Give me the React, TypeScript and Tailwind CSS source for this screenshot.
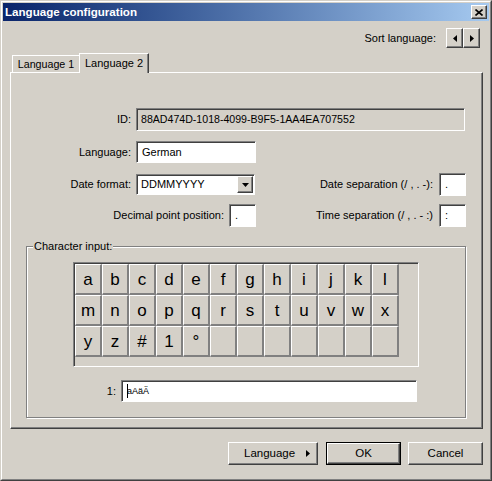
import React from "react";

const raised =
  "border border-t-white border-l-white border-r-[#404040] border-b-[#404040] shadow-[inset_-1px_-1px_0_#808080]";
const sunken =
  "border border-t-[#808080] border-l-[#808080] border-r-white border-b-white shadow-[inset_1px_1px_0_#404040]";

const rows: string[][] = [
  ["a", "b", "c", "d", "e", "f", "g", "h", "i", "j", "k", "l"],
  ["m", "n", "o", "p", "q", "r", "s", "t", "u", "v", "w", "x"],
  ["y", "z", "#", "1", "°", "", "", "", "", "", "", ""],
];

function TriLeft() {
  return (
    <svg width="4" height="7" viewBox="0 0 4 7">
      <path d="M4 0 L0 3.5 L4 7 Z" fill="#000" />
    </svg>
  );
}
function TriRight() {
  return (
    <svg width="4" height="7" viewBox="0 0 4 7">
      <path d="M0 0 L4 3.5 L0 7 Z" fill="#000" />
    </svg>
  );
}
function TriDown() {
  return (
    <svg width="7" height="4" viewBox="0 0 7 4">
      <path d="M0 0 L7 0 L3.5 4 Z" fill="#000" />
    </svg>
  );
}

export default function App() {
  return (
    <div className="w-[492px] h-[481px] bg-[#d4d0c8] border border-t-[#d4d0c8] border-l-[#d4d0c8] border-r-[#404040] border-b-[#404040] font-['Liberation_Sans',Arial,sans-serif] text-[11px] text-black leading-none select-none">
      <div className="h-full border border-t-white border-l-white border-r-[#808080] border-b-[#808080] p-px flex flex-col">
        {/* Title bar */}
        <div className="h-[18px] bg-linear-to-r from-[#0a246a] to-[#a6caf0] flex items-center justify-between pl-[2px] pr-[2px]">
          <span className="text-white font-bold text-[11.6px]">Language configuration</span>
          <div className={`w-[16px] h-[14px] bg-[#d4d0c8] flex items-center justify-center ${raised}`}>
            <svg width="8" height="7" viewBox="0 0 8 7">
              <path d="M0.5 0.5 L7.5 6.5 M7.5 0.5 L0.5 6.5" stroke="#000" strokeWidth="1.6" />
            </svg>
          </div>
        </div>

        {/* Sort language */}
        <div className="mt-[7px] h-[20px] flex items-center justify-end pr-[9px]">
          <span className="mr-[10px]">Sort language:</span>
          <div className={`w-[17px] h-[20px] flex items-center justify-center ${raised}`}>
            <TriLeft />
          </div>
          <div className={`w-[17px] h-[20px] flex items-center justify-center ${raised}`}>
            <TriRight />
          </div>
        </div>

        {/* Tabs */}
        <div className="mt-[5px] ml-[7px] h-[19px] flex items-end pl-[2px]">
          <div className="w-[67px] h-[17px] border-t border-l border-t-white border-l-white flex items-center justify-center pt-[1px] text-[10.7px]">
            Language 1
          </div>
          <div className="relative z-10 w-[70px] h-[20px] -mb-px bg-[#d4d0c8] border-t border-l border-r border-t-white border-l-white border-r-[#404040] shadow-[inset_-1px_0_0_#808080] flex items-start justify-center pt-[4px]">
            Language 2
          </div>
        </div>

        {/* Panel */}
        <div className="ml-[7px] w-[473px] h-[357px] border border-t-white border-l-white border-r-[#404040] border-b-[#404040] shadow-[inset_-1px_-1px_0_#808080] flex flex-col pt-[35px]">
          {/* ID */}
          <div className="flex items-center h-[23px]">
            <div className="w-[120px] text-right mr-[5px]">ID:</div>
            <div className={`w-[329px] h-[23px] bg-[#d4d0c8] flex items-center pl-[4px] text-[10.6px] ${sunken}`}>
              88AD474D-1018-4099-B9F5-1AA4EA707552
            </div>
          </div>

          {/* Language */}
          <div className="flex items-center h-[22px] mt-[10px]">
            <div className="w-[120px] text-right mr-[5px]">Language:</div>
            <div className={`w-[120px] h-[22px] bg-white flex items-center pl-[5px] ${sunken}`}>German</div>
          </div>

          {/* Date format + Date separation */}
          <div className="flex items-center h-[23px] mt-[10px]">
            <div className="w-[120px] text-right mr-[5px]">Date format:</div>
            <div className={`w-[119px] h-[21px] bg-white flex items-center justify-between pl-[4px] pr-[1px] ${sunken}`}>
              <span>DDMMYYYY</span>
              <div className={`w-[16px] h-[17px] bg-[#d4d0c8] flex items-center justify-center ${raised}`}>
                <TriDown />
              </div>
            </div>
            <div className="ml-auto mr-[16px] flex items-center">
              <span className="mr-[6px]">Date separation (/ , . -):</span>
              <div className={`w-[27px] h-[23px] bg-white flex items-center pl-[5px] ${sunken}`}>.</div>
            </div>
          </div>

          {/* Decimal + Time separation */}
          <div className="flex items-center h-[23px] mt-[8px]">
            <div className="w-[213px] text-right mr-[5px]">Decimal point position:</div>
            <div className={`w-[27px] h-[23px] bg-white flex items-center pl-[5px] ${sunken}`}>.</div>
            <div className="ml-auto mr-[16px] flex items-center">
              <span className="mr-[6px]">Time separation (/ , . - :)</span>
              <div className={`w-[27px] h-[23px] bg-white flex items-center pl-[5px] ${sunken}`}>:</div>
            </div>
          </div>

          {/* Character input group */}
          <div className="relative mt-[19px] ml-[15px] w-[440px] h-[172px] border border-[#808080] shadow-[inset_1px_1px_0_#fff,1px_1px_0_#fff]">
            <span className="absolute -top-[6px] left-[6px] bg-[#d4d0c8] px-[1px]">Character input:</span>

            <div className="mt-[15px] ml-[46px] w-[346px] h-[105px] border border-t-[#808080] border-l-[#808080] border-r-white border-b-white shadow-[inset_1px_1px_0_#404040] pt-px pl-px">
              <div className="grid grid-cols-[repeat(12,27px)]">
                {rows.flat().map((k, i) => (
                  <div
                    key={i}
                    className="w-[27px] h-[31px] border-t border-l border-r-2 border-b-2 border-t-white border-l-white border-r-[#808080] border-b-[#808080] flex items-center justify-center text-[17px]"
                  >
                    {k}
                  </div>
                ))}
              </div>
            </div>

            <div className="flex items-center mt-[13px] h-[22px]">
              <div className="w-[89px] text-right mr-[5px]">1:</div>
              <div className={`w-[296px] h-[22px] bg-white flex items-center pl-[5px] ${sunken}`}>
                <span className="inline-block w-px h-[14px] bg-black" />
                <span className="-ml-px text-[9px]">aAäÄ</span>
              </div>
            </div>
          </div>
        </div>

        {/* Buttons */}
        <div className="mt-[13px] flex justify-end pr-[6px]">
          <div className={`w-[90px] h-[23px] flex items-center justify-between pl-[15px] pr-[7px] ${raised}`}>
            <span className="text-[11.5px]">Language</span>
            <TriRight />
          </div>
          <div className="ml-[8px] w-[75px] h-[23px] border border-black">
            <div className={`w-full h-full flex items-center justify-center text-[11.5px] ${raised}`}>OK</div>
          </div>
          <div className={`ml-[7px] w-[75px] h-[23px] flex items-center justify-center text-[11.5px] ${raised}`}>
            Cancel
          </div>
        </div>
      </div>
    </div>
  );
}
